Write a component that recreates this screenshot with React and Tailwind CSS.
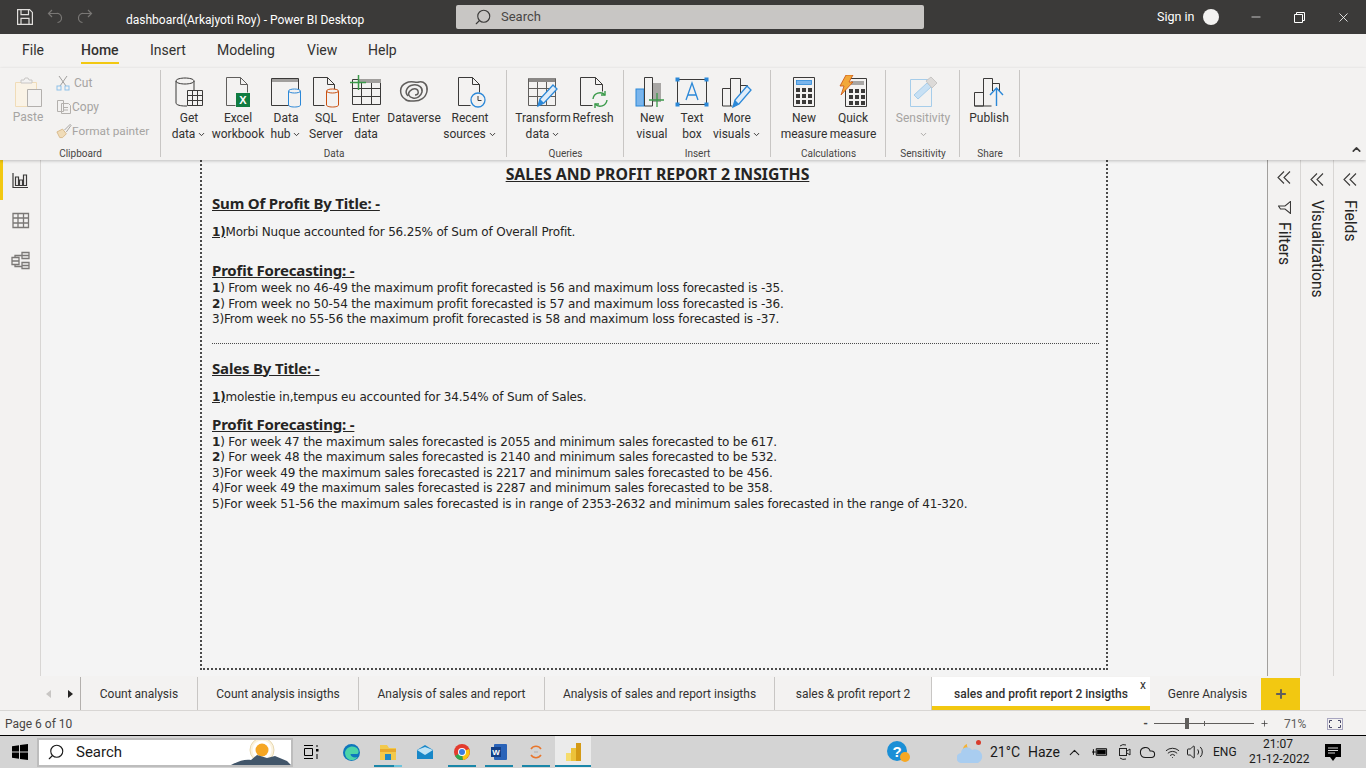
import React from 'react';
import { Search, ChevronDown, ChevronUp, Minus, X, Plus, Wifi, Volume2, Cloud } from 'lucide-react';

const Chev = () => <ChevronDown className="inline w-[9px] h-[9px] ml-[2px]" strokeWidth={2.5} />;

const ico = { width: 34, height: 34, viewBox: '0 0 34 34', fill: 'none' };
const INK = '#3b3a39';
const BLUE = '#2b88d8';

const GetData = () => (
  <svg {...ico}>
    <path d="M4 6v22c0 2 5 3 9 3h2M4 6c0-2 5-3 9-3s9 1 9 3-5 3-9 3-9-1-9-3zM22 6v9" stroke={INK} />
    <path d="M15.5 15.5h15v15h-15zM15.5 20.5h15M15.5 25.5h15M20.5 15.5v15M25.5 15.5v15" stroke={INK} fill="#f3f2f1" />
  </svg>
);
const Excel = () => (
  <svg {...ico}>
    <path d="M5.5 2.5h14l7 7v8M5.5 2.5v28h9M19.5 2.5v7h7" stroke="#605e5c" />
    <rect x="15" y="18" width="14" height="14" fill="#107c41" />
    <text x="22" y="29" textAnchor="middle" fontSize="11" fontWeight="700" fill="#fff" fontFamily="Liberation Sans">X</text>
  </svg>
);
const DataHub = () => (
  <svg {...ico}>
    <path d="M2.5 3.5h27v27h-27z" stroke={INK} />
    <rect x="3" y="4" width="26" height="3" fill="#a19f9d" />
    <path d="M19.5 16v14c0 1 2 2 6 2s6-1 6-2V16" fill="#f3f2f1" stroke={BLUE} />
    <ellipse cx="25.5" cy="16" rx="6" ry="2" fill="#f3f2f1" stroke={BLUE} />
  </svg>
);
const Sql = () => (
  <svg {...ico}>
    <path d="M4.5 2.5h14l7 7v6M4.5 2.5v28h11M18.5 2.5v7h7" stroke={INK} />
    <path d="M17.5 16v14c0 1 2 2 6 2s6-1 6-2V16" fill="#f3f2f1" stroke="#ca5010" />
    <ellipse cx="23.5" cy="16" rx="6" ry="2" fill="#f3f2f1" stroke="#ca5010" />
  </svg>
);
const Enter = () => (
  <svg {...ico}>
    <path d="M3.5 4.5h28v25h-28zM3.5 13.5h28M3.5 21.5h28M12.5 4.5v25M22.5 4.5v25" stroke={INK} />
    <rect x="10" y="4" width="22" height="4" fill="#a19f9d" />
    <path d="M9.5 0v15M1 7.5h16" stroke="#3a9a4a" strokeWidth="1.5" />
  </svg>
);
const Dataverse = () => (
  <svg {...ico}>
    <path d="M8 24C2 20 2 11 9 8c5-3 9 0 13-1 5-1 9 3 8 9-1 7-7 10-13 10-3 0-7 1-9-2z" stroke="#605e5c" strokeWidth="1.5" />
    <path d="M11 21c-4-4-1-10 5-11s10 3 9 7-5 7-9 6-6-4-3-7 7-3 8 0-1 4-3 4" stroke="#605e5c" strokeWidth="1.5" />
  </svg>
);
const Recent = () => (
  <svg {...ico}>
    <path d="M5.5 2.5h14l7 7v8M5.5 2.5v28h12M19.5 2.5v7h7" stroke={INK} />
    <circle cx="25" cy="25" r="7" fill="#f3f2f1" stroke={BLUE} strokeWidth="1.3" />
    <path d="M25 21v4.500h3.500" stroke={INK} />
  </svg>
);
const Transform = () => (
  <svg {...ico}>
    <path d="M2.5 3.5h27v27h-27zM2.5 13.5h27M2.5 21.5h27M11.5 7v23M20.5 7v23" stroke="#605e5c" />
    <rect x="3" y="3" width="26" height="4" fill="#8a8886" />
    <path d="M12 31l2-7L27 10l4 4-13 14z" fill="#deecf9" stroke={BLUE} strokeWidth="1.3" />
    <path d="M12 31l2-7 4 4z" fill={BLUE} />
  </svg>
);
const Refresh = () => (
  <svg {...ico}>
    <path d="M4.5 2.5h15l7 7v7M4.5 2.5v28h12M19.5 2.5v7h7" stroke={INK} />
    <path d="M17 24a7 7 0 0 1 12-4M31 25a7 7 0 0 1-12 4" stroke="#3a9a4a" strokeWidth="1.4" />
    <path d="M29 16v4h-4M19 33v-4h4" stroke="#3a9a4a" strokeWidth="1.4" />
  </svg>
);
const NewVisual = () => (
  <svg {...ico}>
    <rect x="1" y="14" width="8" height="17" fill="#7ab5ec" stroke={BLUE} />
    <path d="M9.5 31V2.5h8V31z" stroke={INK} fill="#f3f2f1" />
    <rect x="18" y="8" width="8" height="19" fill="#a8a6a4" />
    <path d="M22 18v14M14 25h15" stroke="#3a9a4a" strokeWidth="1.3" />
  </svg>
);
const TextBox = () => (
  <svg {...ico}>
    <path d="M2.5 4.5h29v25h-29z" stroke={INK} />
    {[[2.5, 4.5], [31.5, 4.5], [2.5, 29.5], [31.5, 29.5]].map(([x, y], i) => (
      <rect key={i} x={x - 2} y={y - 2} width="4" height="4" fill={BLUE} />
    ))}
    <path d="M11 25l6-17 6 17M13 20h8" stroke={BLUE} strokeWidth="1.3" />
  </svg>
);
const MoreVisuals = () => (
  <svg {...ico}>
    <path d="M2.5 31V13.5h8M10.5 31V3.5h10V24M20.5 10.5h7V16M2.5 31h10" stroke={INK} />
    <path d="M13 32l2-7L27 11l4 4-12 14z" fill="#deecf9" stroke={BLUE} strokeWidth="1.3" />
    <path d="M13 32l2-7 4 4z" fill={BLUE} />
  </svg>
);
const Dots = ({ x, y }) => (
  <g fill={INK}>
    {[0, 1, 2].map(r => [0, 1, 2].map(c => <rect key={`${r}${c}`} x={x + c * 6} y={y + r * 6} width="4" height="4" />))}
  </g>
);
const NewMeasure = () => (
  <svg {...ico}>
    <path d="M6.5 2.5h21v29h-21z" stroke={INK} />
    <rect x="9.5" y="5.5" width="15" height="4" fill="#7ab5ec" stroke={BLUE} strokeWidth="0.8" />
    <Dots x={9} y={13} />
  </svg>
);
const QuickMeasure = () => (
  <svg {...ico}>
    <path d="M9.5 3.5h21v28h-21z" stroke={INK} />
    <rect x="15" y="6" width="13" height="4" fill="#a8a6a4" />
    <Dots x={13} y={14} />
    <path d="M10 0h7l-4 7h4L5 20l3-9H4z" fill="#f2a83a" stroke="#ca5010" strokeWidth="0.8" />
  </svg>
);
const Sensitivity = () => (
  <svg {...ico}>
    <path d="M4.5 4.5h21v27h-21z" stroke="#a6cdea" fill="#f3f2f1" />
    <path d="M8 20L21 8l4 4-13 12z" fill="#c7e0f4" stroke="#a6cdea" />
    <path d="M20 6l5-4 6 6-5 5z" fill="#dcdad8" stroke="#c8c6c4" />
  </svg>
);
const Publish = () => (
  <svg {...ico}>
    <path d="M2.5 31V17.5h9V31zM11.5 31V12M11.5 13V3.5h9V16M20.5 8.5h7V16M2.5 31h17" stroke={INK} />
    <path d="M24.5 31V14M18 20l6.500-7 6.500 7" stroke={BLUE} strokeWidth="1.4" />
  </svg>
);

function Tool({ w, icon, lines, disabled, chevron }) {
  return (
    <div className={`flex flex-col items-center ${disabled ? 'text-[#a6a4a2]' : 'text-[#323130]'}`} style={{ width: w }}>
      <div className="h-[34px] w-[34px]">{icon}</div>
      <div className="mt-[1px] text-center text-[12px] leading-[16px] whitespace-nowrap">
        {lines.map((l, i) => (
          <div key={i}>
            {l}
            {chevron && i === lines.length - 1 && <Chev />}
          </div>
        ))}
      </div>
    </div>
  );
}

function Group({ label, width, pl, children }) {
  return (
    <div className="relative flex h-[92px] shrink-0 flex-col" style={{ width, paddingLeft: pl }}>
      <div className="flex pt-[7px]">{children}</div>
      <div className="absolute bottom-[-1px] left-0 w-full text-center text-[10px] leading-[14px] text-[#484644]">{label}</div>
      <span className="absolute right-0 top-[2px] h-[87px] w-px bg-[#c8c6c4]" />
    </div>
  );
}

function Ribbon() {
  return (
    <div className="relative z-10 flex h-[92px] bg-[#f3f2f1] shadow-[0_1px_3px_rgba(0,0,0,0.22)]">
      <Group label="Clipboard" width={161} pl={0}>
        <div className="flex w-[56px] flex-col items-center pt-[2px] text-[#a6a4a2]">
          <svg width="30" height="32" viewBox="0 0 30 32" fill="none">
            <path d="M2.5 5.5h21v24h-21z" stroke="#f0dcb8" fill="#faf3e6" />
            <path d="M8 6V3h3l1-2h3l1 2h3v3z" stroke="#c8c6c4" fill="#f3f2f1" />
            <path d="M14.5 12.5h14v17h-14z" stroke="#b3b0ad" fill="#f3f2f1" />
          </svg>
          <div className="text-[12px] leading-[16px]">Paste</div>
        </div>
        <div className="flex flex-col gap-[8px] text-[12px] leading-[16px] text-[#a6a4a2] whitespace-nowrap">
          <div className="flex items-center gap-[2px]">
            <svg className="mr-[2px]" width="14" height="16" viewBox="0 0 14 16" fill="none" stroke="#a19f9d"><path d="M3 1l7 10M11 1L4 11" /><rect x="1" y="11" width="4" height="4" stroke="#8fc1ea" /><rect x="9" y="11" width="4" height="4" stroke="#8fc1ea" /></svg>
            <span>Cut</span>
          </div>
          <div className="flex items-center">
            <svg width="16" height="16" viewBox="0 0 16 16" fill="none" stroke="#b3b0ad"><path d="M1.5 1.5h6v11h-6zM5.5 4.5h7l2 2v8h-9z" /><path d="M8 8.5h4M8 11h4" /></svg>
            <span>Copy</span>
          </div>
          <div className="flex items-center">
            <svg width="16" height="16" viewBox="0 0 17 16" fill="none"><path d="M1 9l6-3 4 5-4 4H4z" fill="#f0dcb8" stroke="#d8b98a" /><path d="M9 7l6-6 1 1-5 7" stroke="#a19f9d" /></svg>
            <span className="text-[11.8px]">Format painter</span>
          </div>
        </div>
      </Group>
      <Group label="Data" width={346} pl={4}>
        <Tool w={48} icon={<GetData />} lines={['Get', 'data']} chevron />
        <Tool w={50} icon={<Excel />} lines={['Excel', 'workbook']} />
        <Tool w={46} icon={<DataHub />} lines={['Data', 'hub']} chevron />
        <Tool w={34} icon={<Sql />} lines={['SQL', 'Server']} />
        <Tool w={46} icon={<Enter />} lines={['Enter', 'data']} />
        <Tool w={50} icon={<Dataverse />} lines={['Dataverse']} />
        <Tool w={62} icon={<Recent />} lines={['Recent', 'sources']} chevron />
      </Group>
      <Group label="Queries" width={117} pl={7}>
        <Tool w={58} icon={<Transform />} lines={['Transform', 'data']} chevron />
        <Tool w={42} icon={<Refresh />} lines={['Refresh']} />
      </Group>
      <Group label="Insert" width={147} pl={8}>
        <Tool w={40} icon={<NewVisual />} lines={['New', 'visual']} />
        <Tool w={40} icon={<TextBox />} lines={['Text', 'box']} />
        <Tool w={50} icon={<MoreVisuals />} lines={['More', 'visuals']} chevron />
      </Group>
      <Group label="Calculations" width={115} pl={7}>
        <Tool w={52} icon={<NewMeasure />} lines={['New', 'measure']} />
        <Tool w={46} icon={<QuickMeasure />} lines={['Quick', 'measure']} />
      </Group>
      <Group label="Sensitivity" width={74} pl={3}>
        <div className="flex w-[68px] flex-col items-center text-[#a6a4a2]">
          <div className="h-[34px] w-[34px]"><Sensitivity /></div>
          <div className="mt-[1px] text-[12px] leading-[16px]">Sensitivity</div>
          <ChevronDown className="mt-[4px] h-[9px] w-[9px]" strokeWidth={2.5} />
        </div>
      </Group>
      <Group label="Share" width={60} pl={4}>
        <Tool w={50} icon={<Publish />} lines={['Publish']} />
      </Group>
      <ChevronUp className="absolute bottom-[4px] right-[3px] h-[13px] w-[13px] text-[#3b3a39]" strokeWidth={3} />
    </div>
  );
}

function TitleBar() {
  return (
    <div className="flex h-[34px] items-center bg-[#3b3a39] text-white">
      <svg className="ml-[17px]" width="16" height="16" viewBox="0 0 16 16" fill="none" stroke="#e1dfdd" strokeWidth="1.2">
        <path d="M.6.6h12l2.800 2.800v12H.6zM4 .6v5h7.500v-5M4 15.400v-6h8v6" />
      </svg>
      <svg className="ml-[14px]" width="16" height="16" viewBox="0 0 16 16" fill="none" stroke="#797775" strokeWidth="1.2">
        <path d="M5 1L1.500 4.500 5 8M1.500 4.500h8a4.500 4.500 0 0 1 1 9" />
      </svg>
      <svg className="ml-[14px]" width="16" height="16" viewBox="0 0 16 16" fill="none" stroke="#797775" strokeWidth="1.2">
        <path d="M11 1l3.500 3.500L11 8M14.500 4.500h-8a4.500 4.500 0 0 0-1 9" />
      </svg>
      <div className="ml-[33px] w-[330px] pt-[6px] text-[12px] whitespace-nowrap">dashboard(Arkajyoti Roy) - Power BI Desktop</div>
      <div className="flex h-[24px] w-[468px] items-center rounded-[2px] bg-[#c8c6c4] pl-[18px] text-[#484644]">
        <Search className="h-[18px] w-[18px] -scale-x-100 text-[#3b3a39]" strokeWidth={1.5} />
        <span className="ml-[9px] text-[13px]">Search</span>
      </div>
      <div className="ml-[233px] w-[36px] pt-[1px] text-[12.5px] whitespace-nowrap">Sign in</div>
      <div className="ml-[10px] h-[16px] w-[16px] rounded-full bg-[#f3f2f1]" />
      <Minus className="ml-[30px] h-[14px] w-[14px]" strokeWidth={1.2} />
      <svg className="ml-[31px]" width="11" height="11" viewBox="0 0 11 11" fill="none" stroke="#fff"><path d="M.5 2.500h8v8h-8zM2.500 2.500v-2h8v8h-2" /></svg>
      <X className="ml-[31px] h-[15px] w-[15px]" strokeWidth={1.3} />
    </div>
  );
}

function MenuBar() {
  return (
    <div className="flex h-[34px] bg-[#f3f2f1] pt-[6px] text-[14px] leading-[20px] text-[#323130]">
      <div className="ml-[22px] w-[22px]">File</div>
      <div className="ml-[37px] h-[24px] w-[38px] border-b-[2px] border-[#f2c811] font-medium">Home</div>
      <div className="ml-[31px] w-[35px]">Insert</div>
      <div className="ml-[32px] w-[58px]">Modeling</div>
      <div className="ml-[32px] w-[30px]">View</div>
      <div className="ml-[31px] w-[28px]">Help</div>
    </div>
  );
}

function LeftRail() {
  return (
    <div className="relative flex w-[41px] shrink-0 flex-col items-center gap-[21px] border-r border-[#d8d6d4] bg-[#f3f2f1] pt-[11px]">
      <div className="absolute left-0 top-0 h-[40px] w-[3px] bg-[#f2c811]" />
      <svg width="19" height="19" viewBox="0 0 19 19" fill="none" stroke="#3b3a39" strokeWidth="1.2"><path d="M2 2v14.500h15" /><path d="M4.500 14.500V6h3v8.500zM8.500 14.500V9h3v5.500zM12.500 14.500V4h3v10.500z" /></svg>
      <svg width="19" height="19" viewBox="0 0 19 19" fill="none" stroke="#7a7876" strokeWidth="1.3"><path d="M2 2.500h15.500v14H2zM2 7h15.500M2 12h15.500M7 2.500v14M12.500 2.500v14" /></svg>
      <svg width="19" height="19" viewBox="0 0 19 19" fill="none" stroke="#7a7876" strokeWidth="1.3"><path d="M1 6.500h7v7H1zM11 1.500h7v6h-7zM11 11.500h7v6h-7zM4 6.500V4.500h7M4 13.500v2h7M1 10h7M11 4.500h7M11 14.500h7" /></svg>
    </div>
  );
}

const Ub = ({ children }) => <span className="font-bold underline">{children}</span>;
const H = ({ children, cls }) => <div className={`font-['Noto_Sans',sans-serif] text-[15px] font-bold underline ${cls}`}>{children}</div>;

function ReportPage() {
  return (
    <div className="h-[510px] w-[908px] shrink-0 border-x-2 border-b-2 border-dotted border-[#4a4a4a] pl-[10px] pr-[7px] font-['DejaVu_Sans',sans-serif] text-[12px] leading-[15.5px] tracking-[-0.18px] text-[#252423]">
      <div className="pl-[4px] pt-[4px] text-center font-['Noto_Sans',sans-serif] text-[15.8px] leading-[20px] font-bold tracking-normal underline">SALES AND PROFIT REPORT 2 INSIGTHS</div>
      <H cls="mt-[10px] leading-[18px]">Sum Of Profit By Title: -</H>
      <div className="mt-[12px] leading-[16px]"><Ub>1)</Ub>Morbi Nuque accounted for 56.25% of Sum of Overall Profit.</div>
      <H cls="mt-[22px] leading-[17px]">Profit Forecasting: -</H>
      <div className="mt-[2px]"><b>1</b>) From week no 46-49 the maximum profit forecasted is 56 and maximum loss forecasted is -35.</div>
      <div><b>2</b>) From week no 50-54 the maximum profit forecasted is 57 and maximum loss forecasted is -36.</div>
      <div>3)From week no 55-56 the maximum profit forecasted is 58 and maximum loss forecasted is -37.</div>
      <div className="mt-[15px] border-t border-dotted border-[#4a4a4a]" />
      <H cls="mt-[15px] leading-[18px]">Sales By Title: -</H>
      <div className="mt-[12px] leading-[16px]"><Ub>1)</Ub>molestie in,tempus eu accounted for 34.54% of Sum of Sales.</div>
      <H cls="mt-[11px] leading-[17px]">Profit Forecasting: -</H>
      <div className="mt-[2px]"><b>1</b>) For week 47 the maximum sales forecasted is 2055 and minimum sales forecasted to be 617.</div>
      <div><b>2</b>) For week 48 the maximum sales forecasted is 2140 and minimum sales forecasted to be 532.</div>
      <div>3)For week 49 the maximum sales forecasted is 2217 and minimum sales forecasted to be 456.</div>
      <div>4)For week 49 the maximum sales forecasted is 2287 and minimum sales forecasted to be 358.</div>
      <div>5)For week 51-56 the maximum sales forecasted is in range of 2353-2632 and minimum sales forecasted in the range of 41-320.</div>
    </div>
  );
}

function SidePane({ label, filter, cls }) {
  return (
    <div className={`flex w-[33px] shrink-0 flex-col items-center border-l ${filter ? 'pt-[11px]' : 'pt-[13px]'} ${cls}`}>
      <svg width="14" height="13" viewBox="0 0 14 13" fill="none" stroke="#3b3a39" strokeWidth="1.1"><path d="M7 .5L1 6.500l6 6M13 .5L7 6.500l6 6" /></svg>
      {filter && (
        <svg className="mt-[17px]" width="13" height="13" viewBox="0 0 13 13" fill="none" stroke="#3b3a39" strokeWidth="1.1"><path d="M.5.5h12L8 6v4.500L5 12.500V6z" transform="rotate(90 6.500 6.500)" /></svg>
      )}
      <div className={`${filter ? 'mt-[8px]' : 'mt-[14px]'} text-[15.7px] leading-[18px] text-[#252423] [writing-mode:vertical-rl]`}>{label}</div>
    </div>
  );
}

function SheetTabs() {
  const tabs = [
    ['Count analysis', 117],
    ['Count analysis insigths', 161],
    ['Analysis of sales and report', 186],
    ['Analysis of sales and report insigths', 230],
    ['sales & profit report 2', 157],
  ];
  return (
    <div className="flex h-[35px] border-b border-[#d8d6d4] bg-[#f3f2f1] pt-[1px] text-[12px] text-[#323130]">
      <div className="flex w-[81px] shrink-0 items-center justify-end gap-[17px] border-r border-[#b3b0ad] pr-[7px]">
        <span className="h-0 w-0 border-y-[4px] border-r-[5px] border-y-transparent border-r-[#c8c6c4]" />
        <span className="h-0 w-0 border-y-[4px] border-l-[5px] border-y-transparent border-l-[#252423]" />
      </div>
      {tabs.map(([t, w]) => (
        <div key={t} className="flex shrink-0 items-center justify-center border-r border-[#c8c6c4] whitespace-nowrap" style={{ width: w }}>{t}</div>
      ))}
      <div className="relative flex w-[218px] shrink-0 items-center justify-center border-b-[4px] border-[#f2c811] bg-white pt-[4px] font-medium whitespace-nowrap">
        sales and profit report 2 insigths
        <span className="absolute right-[4px] top-[1px] text-[12px] leading-[14px] font-normal">x</span>
      </div>
      <div className="flex w-[111px] shrink-0 items-center justify-center pl-[4px] whitespace-nowrap">Genre Analysis</div>
      <div className="mt-[1px] flex h-[32px] w-[39px] shrink-0 items-center justify-center bg-[#f2c811]">
        <Plus className="h-[14px] w-[14px] text-[#605e5c]" strokeWidth={3.5} />
      </div>
    </div>
  );
}

function StatusBar() {
  return (
    <div className="flex h-[24px] items-center bg-[#f3f2f1] pt-[1px] text-[12px] text-[#484644]">
      <div className="ml-[5px]">Page 6 of 10</div>
      <div className="ml-auto flex items-center">
        <span className="text-[12px] font-bold leading-none">-</span>
        <div className="relative ml-[6px] h-px w-[100px] bg-[#605e5c]">
          <span className="absolute left-[31px] top-[-5px] h-[11px] w-[4px] bg-[#605e5c]" />
          <span className="absolute left-[50px] top-[-2px] h-[5px] w-px bg-[#605e5c]" />
        </div>
        <Plus className="ml-[6px] h-[9px] w-[9px] text-[#3b3a39]" strokeWidth={2} />
        <span className="ml-[15px] w-[23px] text-[12px] text-[#605e5c]">71%</span>
        <svg className="ml-[20px] mr-[23px]" width="16" height="12" viewBox="0 0 16 12" fill="none">
          <rect x=".5" y=".5" width="15" height="11" stroke="#a8a6c0" />
          <path d="M2.500 5V2.500H5M11 2.500h2.500V5M13.500 7v2.500H11M5 9.500H2.500V7" stroke="#4a4a6a" />
        </svg>
      </div>
    </div>
  );
}

function Taskbar() {
  const u = 'absolute bottom-[1px] h-[2px] bg-[#1a86a8]';
  return (
    <div className="flex h-[33px] items-center border-t border-black bg-[#d4d4d4] text-[#1a1a1a]">
      <svg className="ml-[12px] shrink-0" width="16" height="16" viewBox="0 0 16 16" fill="#000"><path d="M0 2.200l7-1v6.300H0zM8 1l8-1v7.500H8zM0 8.500h7v6.300l-7-1zM8 8.500h8V16l-8-1z" /></svg>
      <div className="relative ml-[9px] flex h-[29px] w-[256px] shrink-0 items-center overflow-hidden border-2 border-[#bdbdbd] bg-white pl-[8px]">
        <Search className="h-[18px] w-[18px] -scale-x-100" strokeWidth={1.5} />
        <span className="ml-[11px] pt-[1px] text-[15px]">Search</span>
        <svg className="absolute bottom-0 right-0" width="62" height="28" viewBox="0 0 62 28">
          <circle cx="33" cy="13" r="12" fill="#fbf3df" stroke="#e8d8b0" />
          <circle cx="33" cy="13" r="9.500" fill="#fff" />
          <circle cx="33" cy="13" r="6.500" fill="#f5a623" />
          <path d="M2 28c8-4 14-6 20-5l6-5 10 3 8-2 12 5 4 4z" fill="#42566a" />
        </svg>
      </div>
      <div className="flex h-full items-center">
        <svg className="ml-[10px]" width="16" height="16" viewBox="0 0 16 16" fill="none" stroke="#000"><path d="M1 1.500h9M1 14.500h9M1.500 4.500h8v7h-8z" /><rect x="13" y="5" width="2.500" height="2.500" fill="#000" stroke="none" /><path d="M14 1v2M14 10v5" /></svg>
        <div className="relative ml-[24px] flex h-full w-[37px] items-center">
          <svg width="17" height="17" viewBox="0 0 17 17"><circle cx="8.5" cy="8.5" r="8.5" fill="#0f76bc" /><path d="M2 8.500C3 3 9 1 13 3.500c3 2 3.500 6 1 6.500H7.500c0 3 4 4 7 3-2 3-5 3.500-7 3C4 15.500 2 12 2 8.500z" fill="#4cd4a8" /></svg>
        </div>
        <div className="relative flex h-full w-[37px] items-center">
          <svg width="16" height="15" viewBox="0 0 16 15"><path d="M0 0h7l2 3h7v12H0z" fill="#f2c94c" /><path d="M0 4h16v3H0z" fill="#e8a92c" /><rect x="5" y="9" width="6" height="6" fill="#1e88c7" /></svg>
          <span className={`${u} left-[-6px] w-[20px]`} />
          <span className="absolute bottom-[1px] left-[14px] h-[2px] w-[8px] bg-[#6cc3dc]" />
        </div>
        <div className="relative flex h-full w-[37px] items-center">
          <svg width="16" height="14" viewBox="0 0 16 14"><path d="M0 5l8-5 8 5v9H0z" fill="#1787c8" /><path d="M0 5l8 5 8-5-8-3z" fill="#bfe3f5" /></svg>
        </div>
        <div className="relative flex h-full w-[37px] items-center">
          <svg width="16" height="16" viewBox="0 0 16 16"><circle cx="8" cy="8" r="8" fill="#e33b2e" /><path d="M8 8L1 12a8 8 0 0 0 8 4z" fill="#2fa84f" /><path d="M8 8l7-3a8 8 0 0 1-6 11z" fill="#f9c50e" /><circle cx="8" cy="8" r="4" fill="#fff" /><circle cx="8" cy="8" r="3" fill="#3b7de0" /></svg>
          <span className={`${u} left-[-6px] w-[28px]`} />
        </div>
        <div className="relative flex h-full w-[37px] items-center">
          <svg width="16" height="16" viewBox="0 0 16 16"><rect x="3" width="13" height="16" rx="1" fill="#2a63b8" /><rect width="10" height="10" y="3" fill="#123f87" /><text x="5" y="11" textAnchor="middle" fontSize="8" fontWeight="700" fill="#fff" fontFamily="Liberation Sans">W</text></svg>
          <span className={`${u} left-[-6px] w-[28px]`} />
        </div>
        <div className="relative flex h-full w-[37px] items-center">
          <svg width="16" height="16" viewBox="0 0 16 16" fill="none" stroke="#e8762c" strokeWidth="1.5"><path d="M3 5a6 6 0 0 1 10 0M3 11a6 6 0 0 0 10 0" /><path d="M6 8h4" stroke="#bbb" /></svg>
          <span className={`${u} left-[-6px] w-[28px]`} />
        </div>
        <div className="relative ml-[-10px] flex h-full w-[36px] items-center justify-center bg-[#ebebeb] pl-[2px]">
          <svg width="16" height="18" viewBox="0 0 16 18"><rect x="0" y="10" width="5" height="8" fill="#f6dc6c" /><rect x="5" y="5" width="5" height="13" fill="#ecc23a" /><rect x="10" y="0" width="5" height="18" fill="#d49a16" /></svg>
          <span className={`${u} left-0 w-full`} />
        </div>
      </div>
      <svg className="ml-[296px] shrink-0" width="24" height="24" viewBox="0 0 24 24">
        <circle cx="10" cy="11" r="10" fill="#1a8fd6" />
        <text x="10" y="17" textAnchor="middle" fontSize="15" fontWeight="700" fill="#fff" fontFamily="Liberation Sans">?</text>
        <circle cx="18" cy="17" r="5" fill="#f7a823" />
      </svg>
      <svg className="ml-[46px] shrink-0" width="26" height="26" viewBox="0 0 26 26">
        <circle cx="21.5" cy="3.5" r="2.500" fill="#d83b2b" />
        <path d="M6 12a6 6 0 0 1 4-7 5 5 0 0 0 5 6z" fill="#f5b335" />
        <path d="M5 24a5 5 0 0 1-1-10 6 6 0 0 1 11-3 6 6 0 0 1 6 13z" fill="#a9cdf0" />
      </svg>
      <div className="ml-[7px] w-[29px] pt-[1px] text-[14px] whitespace-nowrap">21°C</div>
      <div className="ml-[9px] w-[30px] pt-[1px] text-[14px]">Haze</div>
      <ChevronUp className="ml-[8px] h-[17px] w-[17px] shrink-0" strokeWidth={1.5} />
      <svg className="ml-[9px] shrink-0" width="16" height="12" viewBox="0 0 17 12" fill="none" stroke="#000"><path d="M4.500 2.500h11v7h-11z" /><rect x="6" y="4" width="8" height="4" fill="#000" /><path d="M0 6h4M1.500 3v6" /></svg>
      <svg className="ml-[10px] shrink-0" width="13" height="18" viewBox="0 0 13 18" fill="none" stroke="#222"><path d="M2 3a6 6 0 0 1 6-1M2 15a6 6 0 0 0 6 1" /><rect x="1.5" y="5.5" width="7" height="7" /><path d="M9 8l3-2v6l-3-2" /></svg>
      <Cloud className="ml-[8px] h-[17px] w-[17px] shrink-0" strokeWidth={1.5} />
      <Wifi className="ml-[9px] h-[15px] w-[15px] shrink-0" strokeWidth={1.5} />
      <Volume2 className="ml-[6px] h-[18px] w-[18px] shrink-0" strokeWidth={1.3} />
      <div className="ml-[9px] w-[24px] text-[12px]">ENG</div>
      <div className="ml-[12px] w-[58px] shrink-0 text-center text-[12px] leading-[15px] whitespace-nowrap">
        <div>21:07</div>
        <div>21-12-2022</div>
      </div>
      <svg className="ml-[18px] shrink-0" width="16" height="17" viewBox="0 0 16 17">
        <path d="M0 0h16v13h-5l-3 4-3-4H0z" fill="#000" />
        <path d="M3 4h10M3 6.500h10M3 9h7" stroke="#d4d4d4" />
      </svg>
    </div>
  );
}

export default function App() {
  return (
    <div className="flex h-[768px] w-[1366px] flex-col overflow-hidden bg-[#f3f2f1] font-['Roboto',sans-serif]">
      <TitleBar />
      <MenuBar />
      <Ribbon />
      <div className="flex h-[516px] shrink-0">
        <LeftRail />
        <div className="flex w-[1226px] shrink-0 bg-[#f4f4f4] pl-[159px]">
          <ReportPage />
        </div>
        <SidePane label="Filters" filter cls="border-[#a19f9d]" />
        <SidePane label="Visualizations" cls="border-[#d8d6d4]" />
        <SidePane label="Fields" cls="border-[#d8d6d4]" />
      </div>
      <SheetTabs />
      <StatusBar />
      <Taskbar />
    </div>
  );
}
